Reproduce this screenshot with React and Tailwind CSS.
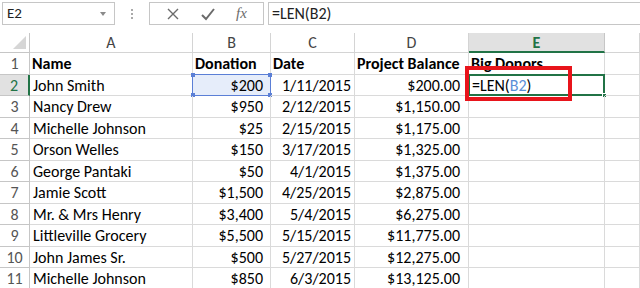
import React from "react";

const ROWS = [
  ["Name", "Donation", "Date", "Project Balance", "Big Donors"],
  ["John Smith", "$200", "1/11/2015", "$200.00", ""],
  ["Nancy Drew", "$950", "2/12/2015", "$1,150.00", ""],
  ["Michelle Johnson", "$25", "2/15/2015", "$1,175.00", ""],
  ["Orson Welles", "$150", "3/17/2015", "$1,325.00", ""],
  ["George Pantaki", "$50", "4/1/2015", "$1,375.00", ""],
  ["Jamie Scott", "$1,500", "4/25/2015", "$2,875.00", ""],
  ["Mr. & Mrs Henry", "$3,400", "5/4/2015", "$6,275.00", ""],
  ["Littleville Grocery", "$5,500", "5/15/2015", "$11,775.00", ""],
  ["John James Sr.", "$500", "5/27/2015", "$12,275.00", ""],
  ["Michelle Johnson", "$850", "6/3/2015", "$13,125.00", ""],
];

const FONT = { fontFamily: "Carlito, Lato, 'Liberation Sans', sans-serif" };

function FormulaBar() {
  return (
    <div className="flex h-[33px] items-start bg-white pt-[2px]">
      <div className="ml-[2px] flex h-[23px] w-[113px] items-center justify-between border border-[#c6c6c6] pl-[4px] pr-[8px]">
        <span className="text-[15px] text-[#222]">E2</span>
        <svg width="6" height="4" viewBox="0 0 6 4">
          <path d="M0 0h6L3 4z" fill="#8a8a8a" />
        </svg>
      </div>
      <div className="flex h-[23px] w-[34px] flex-col items-center justify-center gap-[2px]">
        <span className="h-[2px] w-[2px] bg-[#aaa]" />
        <span className="h-[2px] w-[2px] bg-[#aaa]" />
        <span className="h-[2px] w-[2px] bg-[#aaa]" />
      </div>
      <div className="flex h-[23px] w-[115px] items-center justify-around border border-[#c6c6c6] px-[6px]">
        <svg width="14" height="14" viewBox="0 0 14 14">
          <path d="M2 2l10 10M12 2L2 12" stroke="#6b6b6b" strokeWidth="1.4" />
        </svg>
        <svg width="16" height="14" viewBox="0 0 16 14">
          <path d="M2 8l4 4 8-10" stroke="#6b6b6b" strokeWidth="2" fill="none" />
        </svg>
        <span className="text-[15px] italic text-[#6b6b6b]" style={{ fontFamily: "'Liberation Serif', serif" }}>
          fx
        </span>
      </div>
      <div className="ml-[4px] flex h-[23px] flex-1 items-center border border-r-0 border-[#c6c6c6] pl-[3px]">
        <span className="text-[16px] text-[#222]">=LEN(B2)</span>
      </div>
    </div>
  );
}

const COLS = [
  { key: "A", w: "w-[163px]", align: "justify-start pl-[3px]" },
  { key: "B", w: "w-[78px]", align: "justify-end pr-[7px]" },
  { key: "C", w: "w-[84px]", align: "justify-end pr-[3px]" },
  { key: "D", w: "w-[114px]", align: "justify-end pr-[8px]" },
  { key: "E", w: "w-[136px]", align: "justify-start pl-[3px]" },
  { key: "F", w: "flex-1", align: "justify-start" },
];

function HeaderRow() {
  return (
    <div className="flex h-[20px] bg-white">
      <div className="relative w-[30px] border-r border-b border-[#c6c6c6]">
        <svg className="absolute right-[3px] bottom-[3px]" width="13" height="13" viewBox="0 0 13 13">
          <path d="M13 0V13H0z" fill="#d6d6d6" />
        </svg>
      </div>
      {COLS.map((c) =>
        c.key === "E" ? (
          <div
            key={c.key}
            className={`${c.w} flex items-center justify-center border-r border-b-2 border-r-[#c6c6c6] border-b-[#217346] bg-[#e1e1e1] pt-[1px] text-[16px] font-bold text-[#217346]`}
          >
            {c.key}
          </div>
        ) : (
          <div
            key={c.key}
            className={`${c.w} flex items-center justify-center border-r border-b border-[#d4d4d4] pt-[1px] text-[16px] text-[#444]`}
          >
            {c.key === "F" ? "" : c.key}
          </div>
        )
      )}
    </div>
  );
}

function DataRow({ n, cells }) {
  const active = n === 2;
  const head = n === 1;
  return (
    <div className={`flex h-[21.5px] ${head ? "font-bold" : ""}`}>
      <div
        className={`flex w-[30px] items-center justify-center border-r border-b border-[#c6c6c6] pt-[2px] text-[16px] font-normal ${
          active ? "border-r-2 border-r-[#217346] bg-[#e1e1e1] text-[#217346]" : "text-[#555]"
        }`}
      >
        {n}
      </div>
      {COLS.map((c, i) => {
        const isB2 = active && c.key === "B";
        const isE2 = active && c.key === "E";
        return (
          <div
            key={c.key}
            className={`${c.w} relative flex items-center overflow-visible whitespace-nowrap border-r border-b border-[#dadada] pt-[2px] text-[16px] text-black ${
              head ? "justify-start pl-[2px]" : c.align
            } ${isB2 ? "bg-[#e6edfa]" : ""}`}
          >
            {isE2 ? (
              <span>
                =LEN(<span className="text-[#5b8fd8]">B2</span>)
              </span>
            ) : (
              cells[i] ?? ""
            )}
            {isB2 && (
              <div className="pointer-events-none absolute -top-[1px] -left-[1px] -right-[1px] -bottom-[1px] border border-[#5b7fd6]">
                <span className="absolute -top-[2px] -left-[2px] h-[4px] w-[4px] bg-[#5b7fd6]" />
                <span className="absolute -top-[2px] -right-[2px] h-[4px] w-[4px] bg-[#5b7fd6]" />
                <span className="absolute -bottom-[2px] -left-[2px] h-[4px] w-[4px] bg-[#5b7fd6]" />
                <span className="absolute -bottom-[2px] -right-[2px] h-[4px] w-[4px] bg-[#5b7fd6]" />
              </div>
            )}
            {isE2 && (
              <div className="pointer-events-none absolute -top-[1px] -left-[1px] -right-[1px] -bottom-[1px] border-2 border-[#217346]">
                <span className="absolute -right-[4px] -bottom-[4px] h-[5px] w-[5px] border border-white bg-[#217346]" />
              </div>
            )}
          </div>
        );
      })}
    </div>
  );
}

export default function App() {
  return (
    <div className="relative h-[288px] w-[640px] overflow-hidden bg-white" style={FONT}>
      <FormulaBar />
      <HeaderRow />
      {ROWS.map((cells, i) => (
        <DataRow key={i} n={i + 1} cells={cells} />
      ))}
      {/* red highlight box drawn over the sheet */}
      <div className="pointer-events-none absolute top-[66px] left-[465px] h-[35px] w-[107px] border-4 border-[#e8141b]" />
    </div>
  );
}
